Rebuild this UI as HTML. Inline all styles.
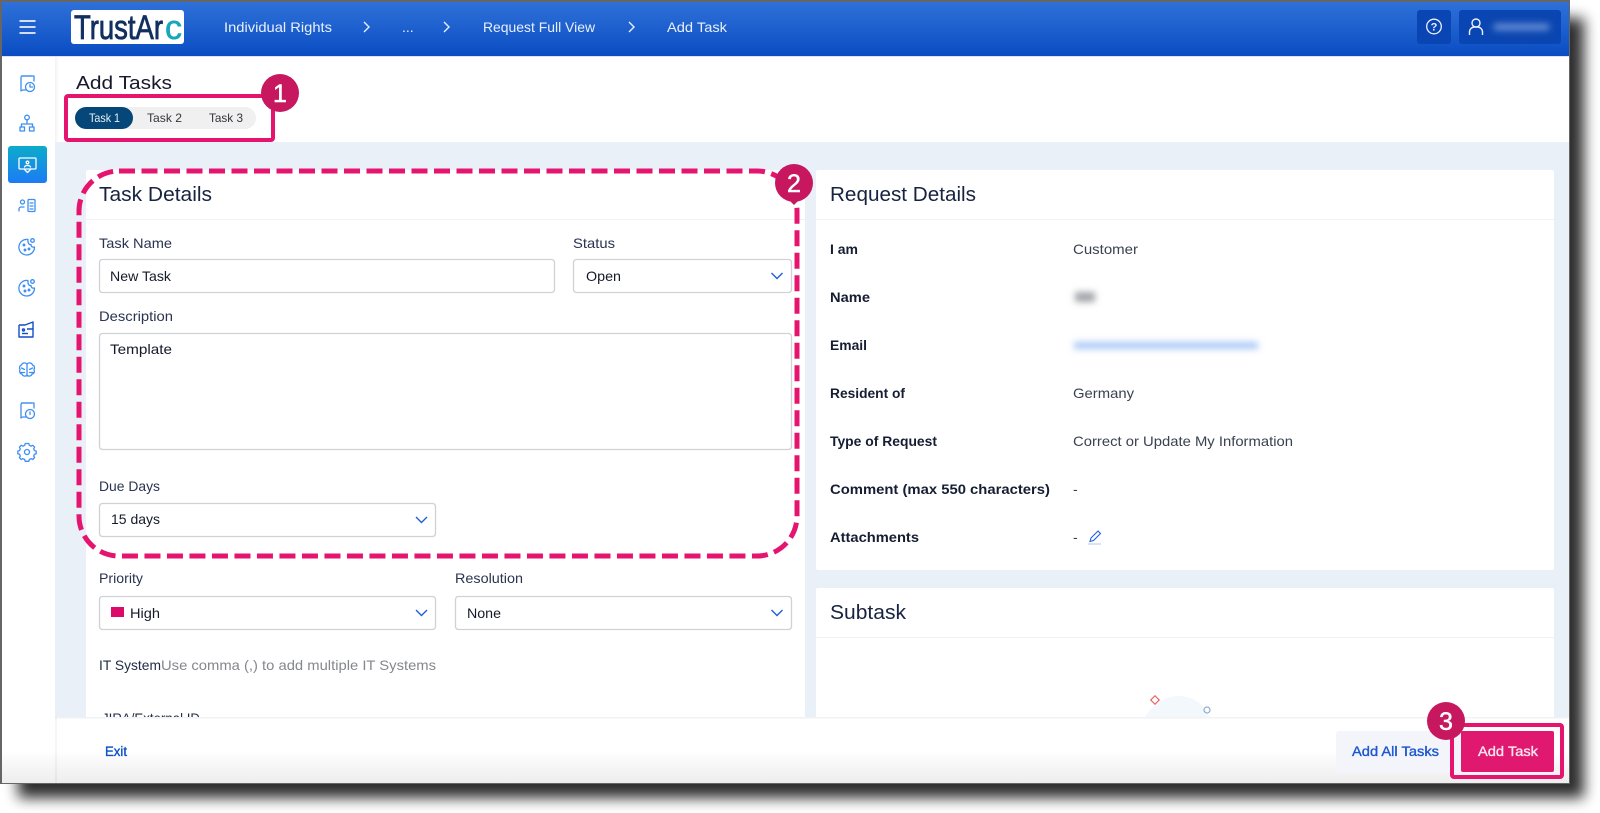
<!DOCTYPE html>
<html lang="en"><head><meta charset="utf-8"><title>Add Tasks</title>
<style>
html,body{margin:0;padding:0;background:#fff;width:1600px;height:813px;overflow:hidden}
svg{display:block}
text{font-family:"Liberation Sans",sans-serif;fill:#1f2a44;font-size:14px}
.h{font-size:20px;fill:#17233f}
.lb{font-size:14px;fill:#2a3450}
.v{font-size:14px;fill:#15192a}
.b{font-size:13.5px;font-weight:700;fill:#151d33}
.val{font-size:14px;fill:#3a4152}
.w{fill:#e9f0fb;font-size:14px}
.box{fill:#fff;stroke:#cfd1d6;stroke-width:1.3}
.chev{fill:none;stroke:#1e5fd8;stroke-width:1.4}
.ic{fill:none;stroke:#3d8ff0;stroke-width:1.3;stroke-linecap:round;stroke-linejoin:round}
.badge{font-size:25px;fill:#fff;text-anchor:middle;stroke:#fff;stroke-width:.5px}
</style></head><body>
<svg width="1600" height="813" viewBox="0 0 1600 813" xmlns="http://www.w3.org/2000/svg">
<defs>
<linearGradient id="hd" x1="0" y1="0" x2="0" y2="1"><stop offset="0" stop-color="#2f71d8"/><stop offset="1" stop-color="#0a4dc3"/></linearGradient>
<linearGradient id="act" x1="0" y1="0" x2="0" y2="1"><stop offset="0" stop-color="#0bacca"/><stop offset="1" stop-color="#1d7bf5"/></linearGradient>
<linearGradient id="fade" x1="0" y1="0" x2="0" y2="1"><stop offset="0" stop-color="#000" stop-opacity="0"/><stop offset="1" stop-color="#000" stop-opacity=".07"/></linearGradient>
<linearGradient id="side" x1="0" y1="0" x2="1" y2="0"><stop offset="0" stop-color="#000" stop-opacity=".05"/><stop offset="1" stop-color="#000" stop-opacity="0"/></linearGradient>
<filter id="sh" x="-5%" y="-5%" width="110%" height="110%"><feGaussianBlur stdDeviation="7"/></filter>
<filter id="bl" x="-50%" y="-500%" width="200%" height="1100%"><feGaussianBlur stdDeviation="3.5"/></filter>
</defs>

<!-- window shadow -->
<rect x="18" y="18" width="1566" height="780" fill="#000" opacity=".82" filter="url(#sh)"/>
<!-- window -->
<rect x="0" y="0" width="1570" height="784" fill="#666"/>
<rect x="2" y="2" width="1567" height="781" fill="#fff"/>

<!-- page bg -->
<rect x="55" y="142" width="1514" height="590" fill="#e9f0f8"/>

<!-- header -->
<rect x="2" y="2" width="1567" height="54" fill="url(#hd)"/>
<rect x="2" y="56" width="1567" height="1" fill="#dde3ee"/>
<path d="M19.500 21h16M19.500 27h16M19.500 33h16" stroke="#eaf1fd" stroke-width="1.700" fill="none"/>
<rect x="71" y="10" width="113" height="34" rx="3" fill="#fff"/>
<text x="74" y="39" textLength="89" lengthAdjust="spacingAndGlyphs" style="font-size:34px;fill:#12305f;stroke:#12305f;stroke-width:.8px">TrustAr</text>
<text x="165" y="39" textLength="17" lengthAdjust="spacingAndGlyphs" style="font-size:34px;fill:#16a7bd;stroke:#16a7bd;stroke-width:.6px">c</text>

<text class="w" x="224" y="32" textLength="108" lengthAdjust="spacingAndGlyphs">Individual Rights</text>
<path d="M364 22l5 5-5 5M444 22l5 5-5 5M629 22l5 5-5 5" fill="none" stroke="#e9f0fb" stroke-width="1.400"/>
<text class="w" x="402" y="32">...</text>
<text class="w" x="483" y="32" textLength="112" lengthAdjust="spacingAndGlyphs">Request Full View</text>
<text class="w" x="667" y="32" textLength="60" lengthAdjust="spacingAndGlyphs">Add Task</text>

<rect x="1417" y="10" width="34" height="34" rx="3" fill="#0a45b4"/>
<circle cx="1434" cy="26.500" r="7.300" fill="none" stroke="#eaf1fd" stroke-width="1.300"/>
<text x="1434" y="30.500" text-anchor="middle" style="font-size:11px;fill:#eaf1fd;font-weight:700">?</text>
<rect x="1459" y="10" width="102" height="34" rx="3" fill="#0a45b4"/>
<circle cx="1476" cy="23" r="4" fill="none" stroke="#eaf1fd" stroke-width="1.400"/>
<path d="M1469.500 35v-3a5 5 0 0 1 5-5h3a5 5 0 0 1 5 5v3" fill="none" stroke="#eaf1fd" stroke-width="1.400"/>
<rect x="1487" y="13" width="68" height="28" fill="#0b46b0" />
<rect x="1494" y="24" width="55" height="6" fill="#6f94da" filter="url(#bl)"/>

<!-- title strip -->
<text x="76" y="89" textLength="96" lengthAdjust="spacingAndGlyphs" style="font-size:18.500px;fill:#15192a">Add Tasks</text>
<rect x="75" y="107" width="181" height="22" rx="11" fill="#f0f0f0"/>
<rect x="75" y="107" width="58" height="22" rx="11" fill="#06477a"/>
<text x="89" y="122" textLength="31" lengthAdjust="spacingAndGlyphs" style="font-size:12px;fill:#e9f0f6">Task 1</text>
<text x="147" y="122" textLength="35" lengthAdjust="spacingAndGlyphs" style="font-size:12px;fill:#33363c">Task 2</text>
<text x="209" y="122" textLength="34" lengthAdjust="spacingAndGlyphs" style="font-size:12px;fill:#33363c">Task 3</text>

<!-- left card -->
<rect x="86" y="170" width="719" height="560" fill="#fff" rx="2"/>
<rect x="86" y="219" width="719" height="1" fill="#f1f2f4"/>
<text class="h" x="99" y="201" textLength="113" lengthAdjust="spacingAndGlyphs">Task Details</text>

<text class="lb" x="99" y="248" textLength="73" lengthAdjust="spacingAndGlyphs">Task Name</text>
<rect class="box" x="99.500" y="259.500" width="455" height="33" rx="3"/>
<text class="v" x="110" y="281" textLength="61" lengthAdjust="spacingAndGlyphs">New Task</text>
<text class="lb" x="573" y="248" textLength="42" lengthAdjust="spacingAndGlyphs">Status</text>
<rect class="box" x="573.500" y="259.500" width="218" height="33" rx="3"/>
<text class="v" x="586" y="281" textLength="35" lengthAdjust="spacingAndGlyphs">Open</text>
<path class="chev" d="M771.500 273l5.500 5.500 5.500-5.500"/>

<text class="lb" x="99" y="321" textLength="74" lengthAdjust="spacingAndGlyphs">Description</text>
<rect class="box" x="99.500" y="333.500" width="692" height="116" rx="3"/>
<text class="v" x="110" y="354" textLength="62" lengthAdjust="spacingAndGlyphs">Template</text>

<text class="lb" x="99" y="491" textLength="61" lengthAdjust="spacingAndGlyphs">Due Days</text>
<rect class="box" x="99.500" y="503.500" width="336" height="33" rx="3"/>
<text class="v" x="111" y="524" textLength="49" lengthAdjust="spacingAndGlyphs">15 days</text>
<path class="chev" d="M416 517l5.500 5.500 5.500-5.500"/>

<text class="lb" x="99" y="583" textLength="44" lengthAdjust="spacingAndGlyphs">Priority</text>
<rect class="box" x="99.500" y="596.500" width="336" height="33" rx="3"/>
<rect x="111" y="607" width="13" height="10" fill="#dc0a68"/>
<text class="v" x="130" y="618" textLength="30" lengthAdjust="spacingAndGlyphs">High</text>
<path class="chev" d="M416 610l5.500 5.500 5.500-5.500"/>
<text class="lb" x="455" y="583" textLength="68" lengthAdjust="spacingAndGlyphs">Resolution</text>
<rect class="box" x="455.500" y="596.500" width="336" height="33" rx="3"/>
<text class="v" x="467" y="618" textLength="34" lengthAdjust="spacingAndGlyphs">None</text>
<path class="chev" d="M771.500 610l5.500 5.500 5.500-5.500"/>

<text x="99" y="670" textLength="62" lengthAdjust="spacingAndGlyphs" style="fill:#1f2a44">IT System</text>
<text x="161" y="670" textLength="275" lengthAdjust="spacingAndGlyphs" style="fill:#85878d">Use comma (,) to add multiple IT Systems</text>
<text x="102" y="723" textLength="98" lengthAdjust="spacingAndGlyphs" style="fill:#1f2a44">JIRA/External ID</text>

<!-- right cards -->
<rect x="816" y="170" width="738" height="400" fill="#fff" rx="2"/>
<rect x="816" y="219" width="738" height="1" fill="#f1f2f4"/>
<text class="h" x="830" y="201" textLength="146" lengthAdjust="spacingAndGlyphs">Request Details</text>
<text class="b" x="830" y="254" textLength="28" lengthAdjust="spacingAndGlyphs">I am</text>
<text class="val" x="1073" y="254" textLength="65" lengthAdjust="spacingAndGlyphs">Customer</text>
<text class="b" x="830" y="302" textLength="40" lengthAdjust="spacingAndGlyphs">Name</text>
<rect x="1075" y="292" width="20" height="10" fill="#a2a4a8" filter="url(#bl)"/>
<text class="b" x="830" y="350" textLength="37" lengthAdjust="spacingAndGlyphs">Email</text>
<rect x="1074" y="342" width="184" height="7" fill="#a9c8f7" filter="url(#bl)"/>
<text class="b" x="830" y="398" textLength="75" lengthAdjust="spacingAndGlyphs">Resident of</text>
<text class="val" x="1073" y="398" textLength="61" lengthAdjust="spacingAndGlyphs">Germany</text>
<text class="b" x="830" y="446" textLength="107" lengthAdjust="spacingAndGlyphs">Type of Request</text>
<text class="val" x="1073" y="446" textLength="220" lengthAdjust="spacingAndGlyphs">Correct or Update My Information</text>
<text class="b" x="830" y="494" textLength="220" lengthAdjust="spacingAndGlyphs">Comment (max 550 characters)</text>
<text class="val" x="1073" y="494">-</text>
<text class="b" x="830" y="542" textLength="89" lengthAdjust="spacingAndGlyphs">Attachments</text>
<text class="val" x="1073" y="542">-</text>
<path d="M1090 541.500l1-3.500 7-7 2.500 2.500-7 7z" fill="none" stroke="#1e5fd8" stroke-width="1.100"/>
<rect x="1088" y="543.500" width="13" height="1" fill="#b5c6ee"/>

<rect x="816" y="588" width="738" height="142" fill="#fff" rx="2"/>
<rect x="816" y="637" width="738" height="1" fill="#f1f2f4"/>
<text class="h" x="830" y="619" textLength="76" lengthAdjust="spacingAndGlyphs">Subtask</text>
<path d="M1145 717c8-14 22-21 33-21 14 0 25 7 32 21z" fill="#f3f8fd"/>
<rect x="1152" y="697" width="6" height="6" transform="rotate(45 1155 700)" fill="none" stroke="#ea5a5a" stroke-width="1.100"/>
<circle cx="1207" cy="710" r="3" fill="none" stroke="#8cadcc" stroke-width="1.200"/>

<!-- sidebar -->
<rect x="2" y="57" width="53" height="726" fill="#fff"/>
<rect x="55" y="57" width="4" height="85" fill="url(#side)"/>
<rect x="8" y="146" width="39" height="37" rx="3" fill="url(#act)"/>
<g class="ic">
<path d="M32 76h-9.500a1.500 1.500 0 0 0-1.500 1.500V91l1.500-1H26"/><path d="M34 76v5"/><path d="M21.500 76h12"/><circle cx="30" cy="87" r="4.500"/><path d="M30 84.500V87h2.500"/>
<circle cx="27" cy="117.500" r="2.300"/><path d="M27 120v4M21.500 127v-3h11v3"/><rect x="20" y="127" width="4.500" height="4"/><rect x="29.500" y="127" width="4.500" height="4"/>
</g>
<g fill="none" stroke="#fff" stroke-width="1.300" stroke-linecap="round" stroke-linejoin="round">
<rect x="19" y="158" width="17" height="11" rx="1"/><path d="M24 169l3.500 3.500 3.500-3.500"/><circle cx="27.500" cy="162.500" r="1.300"/><path d="M24.500 167c.5-2 5.500-2 6 0"/>
</g>
<g class="ic">
<circle cx="22.500" cy="202" r="2"/><path d="M19 211v-2a2 2 0 0 1 2-2h3"/><rect x="28" y="199.500" width="7" height="12" rx="1"/><path d="M30 203h3M30 206h3M30 209h3"/>
<g transform="translate(0 -1)"><path d="M28 240.500a7.800 7.800 0 1 0 6.500 7.500c-2.500.5-3.500-.5-3.500-2.500-2 .5-3.500-1.500-3-5z"/><circle cx="32.500" cy="241.500" r="1.800"/><circle cx="24" cy="246" r=".8"/><circle cx="25" cy="251" r=".8"/><circle cx="29" cy="250" r=".8"/></g>
<path d="M28 280.500a7.800 7.800 0 1 0 6.500 7.500c-2.500.5-3.500-.5-3.500-2.500-2 .5-3.500-1.500-3-5z"/><circle cx="32.500" cy="281.500" r="1.800"/><circle cx="24" cy="286" r=".8"/><circle cx="25" cy="291" r=".8"/><circle cx="29" cy="290" r=".8"/>
</g>
<g fill="none" stroke="#0f4fc9" stroke-width="1.400" stroke-linejoin="round">
<path d="M19 325h6l8-3v7"/><path d="M19 325v12h14v-8h-6"/><path d="M22 333.500h6"/><circle cx="23.500" cy="330" r="1"/>
</g>
<g class="ic">
<g transform="translate(0 2)"><path d="M27 362c-2-2-5-1-5.500 1-2 .5-2.500 3-1.500 4.500-1 2 0 4.500 2 4.500.5 2 3.500 3 5 1 1.500 2 4.500 1 5-1 2 0 3-2.500 2-4.500 1-1.500.5-4-1.500-4.500-.5-2-3.500-3-5.500-1zM27 362v12M21.500 366l3 1.500M32.500 366l-3 1.500M21 370.500h3.500M33 370.500h-3.500"/></g>
<path d="M32 403h-9.500a1.500 1.500 0 0 0-1.500 1.500V418l1.500-1H26"/><path d="M34 403v5"/><path d="M21.500 403h12"/><circle cx="30" cy="414" r="4.500"/><path d="M30 412v2.500"/>
<g transform="translate(0 -1)"><circle cx="27" cy="453" r="2.500"/><path d="M25.200 444.500h3.600l.5 1.800 1.800.8 1.700-.8 1.800 1.900-.9 1.600.7 1.700 1.800.6v2.600l-1.800.6-.7 1.700.9 1.600-1.800 1.900-1.700-.8-1.800.8-.5 1.800h-3.600l-.5-1.800-1.800-.8-1.700.8-1.800-1.900.9-1.600-.7-1.700-1.800-.6v-2.600l1.800-.6.7-1.700-.9-1.600 1.800-1.900 1.700.8 1.800-.8z"/></g>
</g>

<!-- footer -->
<rect x="55" y="717" width="1514" height="66" fill="#fff"/>
<rect x="55" y="717" width="1514" height="1.500" fill="#f1f2f4"/>
<rect x="2" y="750" width="1567" height="33" fill="url(#fade)"/>
<rect x="55" y="717" width="2" height="66" fill="#000" opacity=".04"/>
<text x="105" y="756" textLength="22" lengthAdjust="spacingAndGlyphs" style="font-size:13.500px;fill:#0a4fc4;stroke:#0a4fc4;stroke-width:.35px">Exit</text>
<rect x="1336" y="731" width="125" height="41" rx="3" fill="#f3f5fb"/>
<text x="1352" y="756" textLength="87" lengthAdjust="spacingAndGlyphs" style="font-size:13.500px;fill:#1c57cf;stroke:#1c57cf;stroke-width:.35px">Add All Tasks</text>
<rect x="1461" y="731" width="93" height="41" rx="2" fill="#e0186f"/>
<text x="1478" y="756" textLength="60" lengthAdjust="spacingAndGlyphs" style="font-size:13.500px;fill:#fbe6ef;stroke:#fbe6ef;stroke-width:.35px">Add Task</text>

<!-- annotations -->
<rect x="66" y="96" width="207" height="44" rx="2" fill="none" stroke="#e5156f" stroke-width="4"/>
<rect x="79" y="171" width="718" height="385" rx="40" fill="none" stroke="#e5156f" stroke-width="5" stroke-dasharray="16 6.500"/>
<rect x="1452" y="725" width="110" height="52" rx="2" fill="none" stroke="#e5156f" stroke-width="4"/>

<circle cx="280" cy="93" r="19" fill="#c7185f"/>
<text class="badge" x="280" y="102">1</text>
<circle cx="794" cy="183" r="19" fill="#c7185f"/>
<path d="M789 200l5 5 5-5z" fill="#c7185f"/>
<text class="badge" x="794" y="192">2</text>
<circle cx="1446" cy="721" r="19" fill="#c7185f"/>
<text class="badge" x="1446" y="730">3</text>
</svg>
</body></html>
